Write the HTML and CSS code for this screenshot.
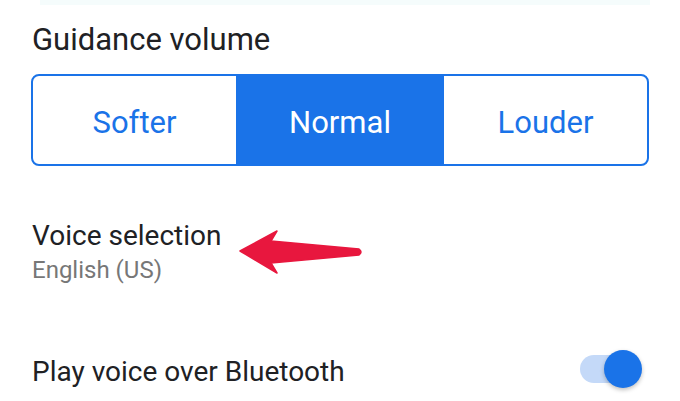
FILE: index.html
```html
<!DOCTYPE html>
<html>
<head>
<meta charset="utf-8">
<link rel="stylesheet" href="styles.css">
</head>
<body>
<div class="page">
  <div class="topline"></div>
  <div class="section-title">Guidance volume</div>
  <div class="segmented">
    <div class="seg">Softer</div>
    <div class="seg active">Normal</div>
    <div class="seg">Louder</div>
  </div>
  <div class="item voice">
    <div class="item-title">Voice selection</div>
    <div class="item-sub">English (US)</div>
    <svg class="arrow" width="130" height="50" viewBox="0 0 130 50">
      <path d="M2 24 L39 4 L33 14 L121 22 Q125 25 121 28 L33 36 L39 46 Z" fill="#e8173e" stroke="#e8173e" stroke-width="1.5" stroke-linejoin="round"/>
    </svg>
  </div>
  <div class="row">
    <div class="item-title row-title">Play voice over Bluetooth</div>
    <div class="toggle"><div class="track"></div><div class="thumb"></div></div>
  </div>
</div>
</body>
</html>
```
FILE: styles.css
```css
html, body {
  margin: 0;
  padding: 0;
  background: #ffffff;
}
.page {
  width: 680px;
  height: 401px;
  overflow: hidden;
  font-family: Roboto, "Liberation Sans", sans-serif;
  color: #202124;
}
.topline {
  height: 5px;
  margin: 0 30px 0 40px;
  background: #f5fcfc;
}
.section-title {
  font-size: 31px;
  line-height: 36px;
  margin: 17px 0 0 32px;
}
.segmented {
  margin: 16px 31px 0 31px;
  height: 88px;
  border: 2px solid #1a73e8;
  border-radius: 8px;
  display: grid;
  grid-template-columns: 203px 208px 1fr;
  overflow: hidden;
}
.seg {
  display: flex;
  align-items: center;
  justify-content: center;
  font-size: 31px;
  color: #1a73e8;
  padding-top: 4px;
}
.seg.active {
  background: #1a73e8;
  color: #ffffff;
}
.item {
  position: relative;
  margin: 53px 0 0 32px;
}
.item-title {
  font-size: 28px;
  line-height: 34px;
}
.item-sub {
  font-size: 24px;
  line-height: 30px;
  color: #777777;
  margin-top: 2px;
}
.arrow {
  position: absolute;
  left: 206px;
  top: 8px;
}
.row {
  display: flex;
  align-items: center;
  justify-content: space-between;
  margin: 64px 38px 0 32px;
}
.row-title {
  padding-top: 5px;
}
.toggle {
  position: relative;
  width: 62px;
  height: 40px;
}
.track {
  position: absolute;
  left: 0;
  top: 6px;
  width: 50px;
  height: 28px;
  border-radius: 14px;
  background: #c4d9f8;
}
.thumb {
  position: absolute;
  right: 0;
  top: 1px;
  width: 38px;
  height: 38px;
  border-radius: 50%;
  background: #1a73e8;
  box-shadow: 0 2px 4px rgba(0,0,0,0.25);
}
```
